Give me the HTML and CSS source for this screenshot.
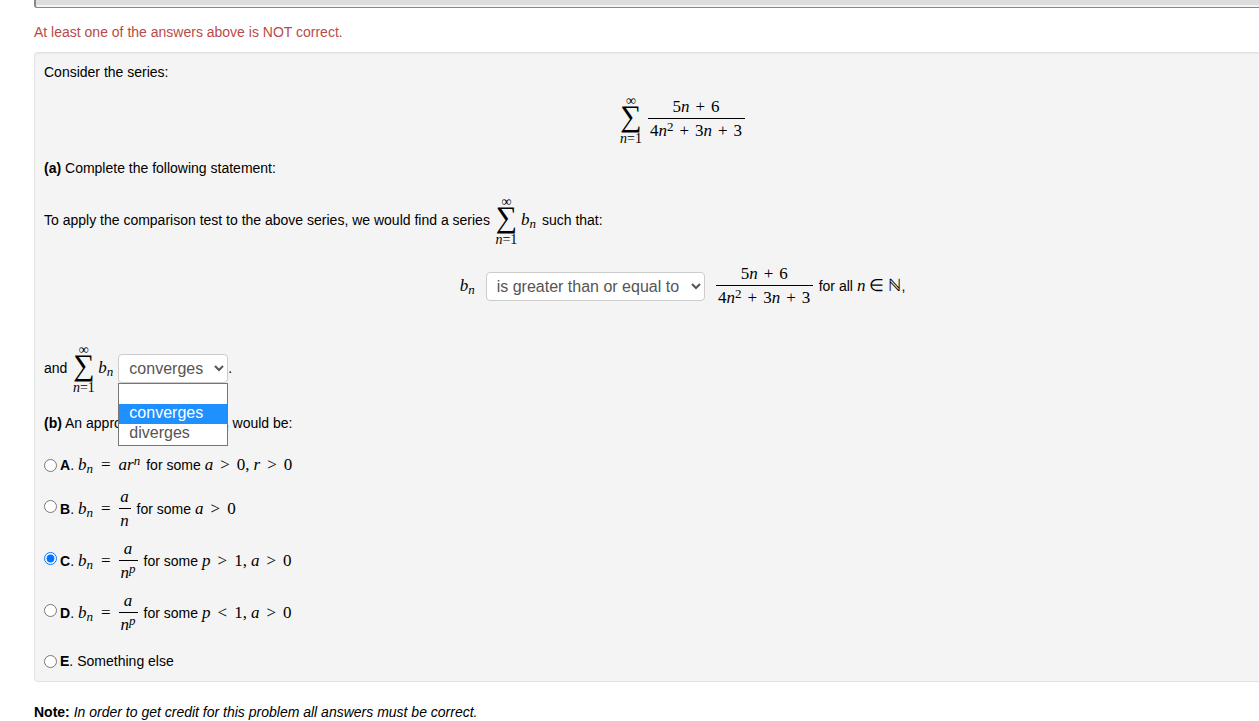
FILE: index.html
```html
<!DOCTYPE html>
<html lang="en">
<head>
<meta charset="utf-8">
<title>Comparison test</title>
<link rel="stylesheet" href="styles.css">
</head>
<body>
<div class="results"></div>
<p class="error">At least one of the answers above is NOT correct.</p>
<main class="problem">
  <p class="line">Consider the series:</p>
  <div class="row display">
    <span class="sum"><span class="limit">∞</span><span class="sigma">∑</span><span class="limit"><i>n</i>=1</span></span>
    <span class="frac wide"><span class="num">5<i>n</i><span class="plus">+</span>6</span><span class="den">4<i>n</i><sup>2</sup><span class="plus">+</span>3<i>n</i><span class="plus">+</span>3</span></span>
  </div>
  <p class="line part-a"><b>(a)</b> Complete the following statement:</p>
  <div class="row statement">
    <span>To apply the comparison test to the above series, we would find a series</span>
    <span class="sum"><span class="limit">∞</span><span class="sigma">∑</span><span class="limit"><i>n</i>=1</span></span>
    <span class="math"><i>b</i><sub>n</sub></span>
    <span class="after">such that:</span>
  </div>
  <div class="row inequality">
    <span class="math"><i>b</i><sub>n</sub></span>
    <select class="choice compare" aria-label="Comparison"><option>is greater than or equal to</option><option>is less than or equal to</option></select>
    <span class="frac wide"><span class="num">5<i>n</i><span class="plus">+</span>6</span><span class="den">4<i>n</i><sup>2</sup><span class="plus">+</span>3<i>n</i><span class="plus">+</span>3</span></span>
    <span class="after">for all</span>
    <span class="math tail"><i>n</i><span class="in">∈</span><span class="set">ℕ</span></span><span>,</span>
  </div>
  <div class="row conclusion">
    <span>and</span>
    <span class="sum"><span class="limit">∞</span><span class="sigma">∑</span><span class="limit"><i>n</i>=1</span></span>
    <span class="math"><i>b</i><sub>n</sub></span>
    <span class="picker">
      <select class="choice result" aria-label="Convergence"><option></option><option selected>converges</option><option>diverges</option></select>
      <span class="menu" role="listbox" aria-label="Convergence options"><span class="item" role="option"></span><span class="item active" role="option" aria-selected="true">converges</span><span class="item" role="option">diverges</span></span>
    </span>
    <span>.</span>
  </div>
  <p class="line part-b"><b>(b)</b> An appropriate value of <span class="math"><i>b</i><sub>n</sub></span> would be:</p>
  <div class="options">
    <label class="option"><input type="radio" name="series"><span><b>A</b>.</span><span class="math lead"><i>b</i><sub>n</sub><span class="rel">=</span><i>ar</i><sup><i>n</i></sup></span><span class="words">for some</span><span class="math tail"><i>a</i><span class="rel">&gt;</span>0<span class="comma">,</span><i>r</i><span class="rel">&gt;</span>0</span></label>
    <label class="option tall first"><input type="radio" name="series"><span><b>B</b>.</span><span class="math lead"><i>b</i><sub>n</sub><span class="rel">=</span></span><span class="frac"><span class="num"><i>a</i></span><span class="den"><i>n</i></span></span><span class="words">for some</span><span class="math tail"><i>a</i><span class="rel">&gt;</span>0</span></label>
    <label class="option tall"><input type="radio" name="series" checked><span><b>C</b>.</span><span class="math lead"><i>b</i><sub>n</sub><span class="rel">=</span></span><span class="frac power"><span class="num"><i>a</i></span><span class="den"><i>n</i><sup><i>p</i></sup></span></span><span class="words">for some</span><span class="math tail"><i>p</i><span class="rel">&gt;</span>1<span class="comma">,</span><i>a</i><span class="rel">&gt;</span>0</span></label>
    <label class="option tall"><input type="radio" name="series"><span><b>D</b>.</span><span class="math lead"><i>b</i><sub>n</sub><span class="rel">=</span></span><span class="frac power"><span class="num"><i>a</i></span><span class="den"><i>n</i><sup><i>p</i></sup></span></span><span class="words">for some</span><span class="math tail"><i>p</i><span class="rel">&lt;</span>1<span class="comma">,</span><i>a</i><span class="rel">&gt;</span>0</span></label>
    <label class="option last"><input type="radio" name="series"><span><b>E</b>.</span><span class="lead">Something else</span></label>
  </div>
</main>
<p class="note"><b>Note:</b> <i>In order to get credit for this problem all answers must be correct.</i></p>
</body>
</html>
```
FILE: styles.css
```css
* { box-sizing: border-box; }
body {
  margin: 0;
  padding-left: 34px;
  background: #fff;
  color: #000;
  font: 14px/20px "Liberation Sans", Arial, sans-serif;
}
p { margin: 0; }
.results {
  height: 8px;
  border: 1px solid #888;
  border-width: 0 0 1px 2px;
  border-radius: 0 0 0 3px;
  background: #ddd;
  box-shadow: inset 0 -2px #f4f4f4;
}
.error { margin: 14px 0 10px; color: #b94a48; }

.problem {
  padding: 9px 0 10px 9px;
  border: 1px solid #e3e3e3;
  border-right: 0;
  border-radius: 4px 0 0 4px;
  background: #f4f4f4;
  box-shadow: inset 0 1px 1px #e8e8e8;
}
.row { display: flex; align-items: center; min-height: 52px; white-space: nowrap; }
.display { justify-content: center; gap: 4px; margin-top: 11px; padding-left: 60px; }
.part-a { margin-top: 13px; }
.statement { margin-top: 16px; }
.statement .sum { margin: 0 2px 0 4px; }
.inequality { justify-content: center; margin-top: 14px; padding-left: 62px; }
.conclusion { margin-top: 30px; }
.conclusion .sum { margin: 0 2px 0 4px; }
.part-b { margin-top: 19px; }
.after { margin-left: 6px; }

.math, .frac, .sum { font-family: "Liberation Serif", "Times New Roman", serif; font-size: 17px; }
.part-b .math { line-height: 0; }
.math sub, .math sup, .den sup { font-size: 13px; line-height: 0; }
.math sub { font-style: italic; vertical-align: -3px; }
.math sup, .den sup { vertical-align: 5px; }
.sum { display: flex; flex-direction: column; align-items: center; width: 25px; padding-top: 2px; }
.limit { font-size: 14px; line-height: 10px; }
.sigma { padding-bottom: 8px; font-size: 30px; line-height: 20px; }
.frac { display: flex; flex-direction: column; min-width: 12px; padding-top: 1px; text-align: center; }
.num { line-height: 22px; border-bottom: 1px solid #000; }
.den { line-height: 24px; }
.wide { width: 97px; }
.power { width: 19px; }
.plus { margin: 0 6px; }
.in { margin: 0 4px; }
.rel { margin: 0 7px; }
.lead .rel { margin: 0 8px; }
.comma { margin-right: 4px; }
.tail { margin-left: 4px; }

.choice {
  height: 29px;
  padding: 0 6px;
  border: 1px solid #ccc;
  border-radius: 4px;
  background-color: #fff;
  color: #555;
  font: 16px/20px "Liberation Sans", Arial, sans-serif;
}
.compare { width: 219px; margin: 0 11px; }
.picker { position: relative; margin-left: 5px; }
.result { display: block; width: 110px; }
.menu {
  position: absolute;
  top: 100%;
  left: 0;
  right: 0;
  padding-bottom: 1px;
  border: 1px solid #767676;
  background: #fff;
}
.item { display: block; height: 20px; padding-left: 10px; color: #555; font-size: 16px; line-height: 18px; }
.active { background: #1e90ff; color: #fff; }

.options { display: flex; flex-direction: column; gap: 4px; margin-top: 22px; }
.option { display: flex; align-items: center; width: fit-content; min-height: 20px; white-space: nowrap; }
.option input { width: 13px; height: 13px; margin: 0 3px 0 0; }
.tall { min-height: 48px; }
.tall input { margin-bottom: 6px; }
.first { margin-top: 6px; }
.last { margin-top: 10px; }
.lead { margin-left: 4px; }
.words { margin-left: 6px; }
.note { margin-top: 20px; }
```
